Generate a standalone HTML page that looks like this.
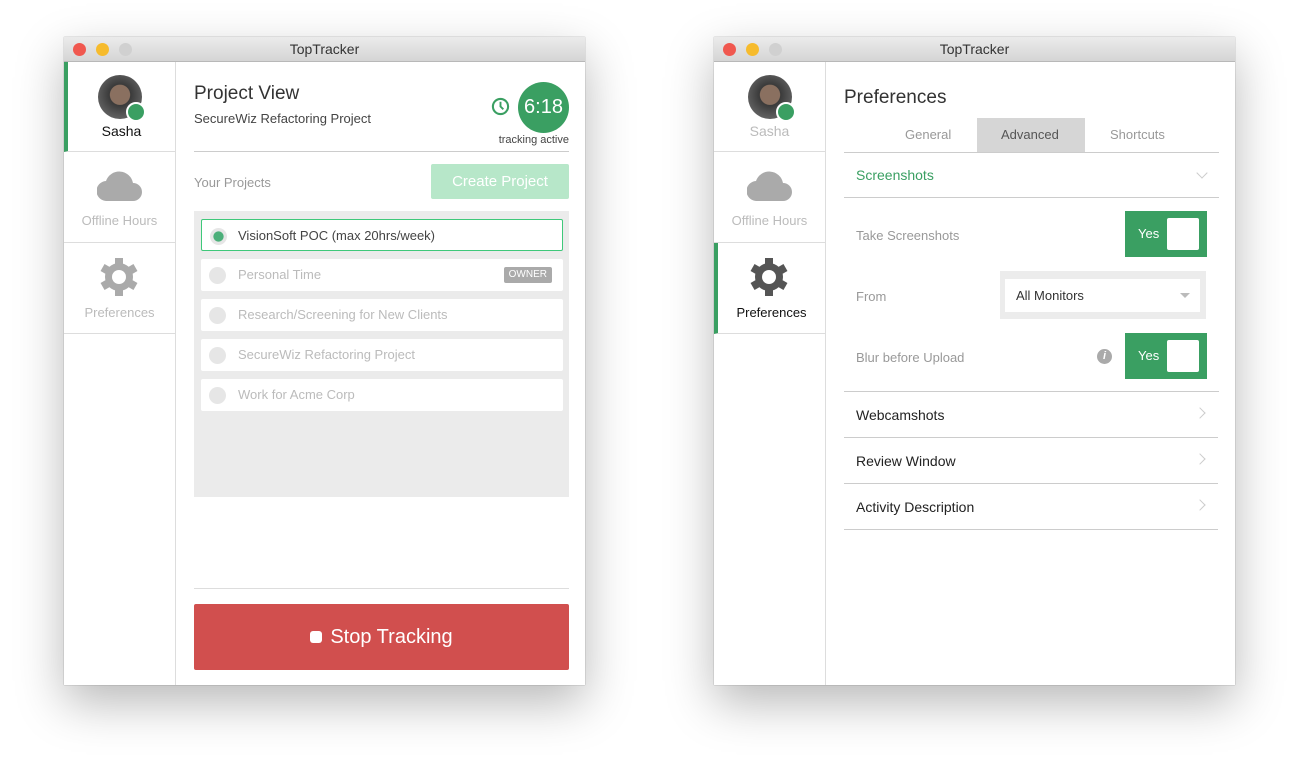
<!DOCTYPE html>
<html><head><meta charset="utf-8"><style>
*{box-sizing:border-box;margin:0;padding:0}
body{width:1300px;height:777px;background:#fff;position:relative;font-family:"Liberation Sans",sans-serif;overflow:hidden}
.a{position:absolute}
.win{position:absolute;top:37px;width:521px;height:648px;background:#fff;box-shadow:0 18px 45px rgba(0,0,0,.28),0 0 1px rgba(0,0,0,.4)}
.tb{position:absolute;left:0;top:0;width:100%;height:25px;background:linear-gradient(#ebebeb,#d5d5d5);border-bottom:1px solid #b8b8b8;text-align:center;font-size:14px;line-height:25px;color:#333}
.dot{position:absolute;top:6px;width:13px;height:13px;border-radius:50%}
.side{position:absolute;left:0;top:25px;width:112px;height:623px;border-right:1px solid #ddd}
.si{position:absolute;left:0;width:111px;border-bottom:1px solid #ddd;text-align:center;font-size:13px;color:#bbb}
.av{position:absolute;left:34px;top:13px;width:44px;height:44px;border-radius:50%;background:radial-gradient(circle at 50% 45%,#8a7060 0 30%,#3a3a3a 32%,#555 60%,#777)}
.badge{position:absolute;left:62px;top:40px;width:20px;height:20px;border-radius:50%;background:#3a9f62;border:2px solid #fff}
.proj{position:absolute;left:7px;width:362px;height:32px;background:#fff;border-radius:2px;font-size:13px;color:#bbb;line-height:32px;padding-left:37px}
.proj i{position:absolute;left:8px;top:8px;width:17px;height:17px;border-radius:50%;background:#e6e6e6}
.lbl{position:absolute;font-size:13px;color:#999}
.tog{position:absolute;width:82px;height:46px;background:#3a9f62;color:#fff;font-size:13px;line-height:46px;padding-left:13px}
.tog b{position:absolute;right:8px;top:7px;width:32px;height:32px;background:#fff;border-radius:2px}
.row{position:absolute;left:130px;width:374px;height:46px;border-bottom:1px solid #ccc;font-size:14px;color:#222;line-height:46px;padding-left:12px}
.chev{position:absolute;right:14px;top:17px;width:8px;height:8px;border-right:1.5px solid #ccc;border-top:1.5px solid #ccc;transform:rotate(45deg)}
</style></head><body>

<!-- Window 1 -->
<div class="win" style="left:64px">
 <div class="tb">TopTracker<div class="dot" style="left:9px;background:#f0584f"></div><div class="dot" style="left:32px;background:#f6bb2d"></div><div class="dot" style="left:55px;background:#d0d0d0"></div></div>
 <div class="side">
  <div class="si" style="top:0;height:90px;border-left:4px solid #3a9f62"><div class="av" style="left:30px"></div><div class="badge" style="left:58px"></div><div class="a" style="left:0;width:107px;top:61px;color:#111;font-size:14px">Sasha</div></div>
  <div class="si" style="top:90px;height:91px"><svg class="a" style="left:33px;top:19px" width="46" height="30" viewBox="0 0 46 30"><path d="M10 30a10 10 0 0 1-1-20 14 14 0 0 1 27 2 9 9 0 0 1 0 18z" fill="#aaa"/></svg><div class="a" style="left:0;width:111px;top:61px">Offline Hours</div></div>
  <div class="si" style="top:181px;height:91px"><svg class="a" style="left:35px;top:14px" width="40" height="40" viewBox="0 0 40 40"><g fill="#aaa"><circle cx="20" cy="20" r="14"/><g id="t"><rect x="16" y="1" width="8" height="8"/><rect x="16" y="31" width="8" height="8"/></g><use href="#t" transform="rotate(60 20 20)"/><use href="#t" transform="rotate(120 20 20)"/></g><circle cx="20" cy="20" r="7" fill="#fff"/></svg><div class="a" style="left:0;width:111px;top:62px">Preferences</div></div>
 </div>
 <div class="a" style="left:130px;top:46px;font-size:19px;color:#333">Project View</div>
 <div class="a" style="left:130px;top:74px;font-size:13px;color:#444">SecureWiz Refactoring Project</div>
 <svg class="a" style="left:427px;top:60px" width="19" height="19" viewBox="0 0 20 20"><circle cx="10" cy="10" r="8" fill="none" stroke="#3a9f62" stroke-width="2.2"/><path d="M10 5v5l3 3" fill="none" stroke="#3a9f62" stroke-width="2"/></svg>
 <div class="a" style="left:454px;top:45px;width:51px;height:51px;border-radius:50%;background:#3a9f62;color:#fff;font-size:20px;line-height:51px;text-align:center">6:18</div>
 <div class="a" style="left:420px;top:97px;width:85px;text-align:right;font-size:11px;color:#444">tracking active</div>
 <div class="a" style="left:130px;top:114px;width:375px;border-top:1px solid #ccc"></div>
 <div class="a" style="left:130px;top:138px;font-size:13px;color:#999">Your Projects</div>
 <div class="a" style="left:367px;top:127px;width:138px;height:35px;background:#b7e7c9;border-radius:2px;color:#fff;font-size:15px;text-align:center;line-height:35px">Create Project</div>
 <div class="a" style="left:130px;top:174px;width:375px;height:286px;background:#ebebeb">
  <div class="proj" style="top:8px;border:1.5px solid #3fc87a;color:#444;padding-left:36px"><i style="background:radial-gradient(#4caf7a 0 40%,#e6e6e6 45%)"></i>VisionSoft POC (max 20hrs/week)</div>
  <div class="proj" style="top:48px"><i></i>Personal Time<span class="a" style="right:11px;top:8px;height:16px;line-height:16px;background:#aaa;color:#fff;font-size:10px;padding:0 5px;border-radius:2px">OWNER</span></div>
  <div class="proj" style="top:88px"><i></i>Research/Screening for New Clients</div>
  <div class="proj" style="top:128px"><i></i>SecureWiz Refactoring Project</div>
  <div class="proj" style="top:168px"><i></i>Work for Acme Corp</div>
 </div>
 <div class="a" style="left:130px;top:551px;width:375px;border-top:1px solid #ddd"></div>
 <div class="a" style="left:130px;top:567px;width:375px;height:66px;background:#d14f4e;border-radius:2px;color:#fff;font-size:20px;text-align:center;line-height:66px"><span style="display:inline-block;width:12px;height:12px;background:#fff;border-radius:3px;margin-right:8px"></span>Stop Tracking</div>
</div>

<!-- Window 2 -->
<div class="win" style="left:714px">
 <div class="tb">TopTracker<div class="dot" style="left:9px;background:#f0584f"></div><div class="dot" style="left:32px;background:#f6bb2d"></div><div class="dot" style="left:55px;background:#d0d0d0"></div></div>
 <div class="side">
  <div class="si" style="top:0;height:90px"><div class="av"></div><div class="badge"></div><div class="a" style="left:0;width:111px;top:61px;font-size:14px">Sasha</div></div>
  <div class="si" style="top:90px;height:91px"><svg class="a" style="left:33px;top:19px" width="46" height="30" viewBox="0 0 46 30"><path d="M10 30a10 10 0 0 1-1-20 14 14 0 0 1 27 2 9 9 0 0 1 0 18z" fill="#aaa"/></svg><div class="a" style="left:0;width:111px;top:61px">Offline Hours</div></div>
  <div class="si" style="top:181px;height:91px;border-left:4px solid #3a9f62"><svg class="a" style="left:31px;top:14px" width="40" height="40" viewBox="0 0 40 40"><g fill="#555"><circle cx="20" cy="20" r="14"/><g id="t2"><rect x="16" y="1" width="8" height="8"/><rect x="16" y="31" width="8" height="8"/></g><use href="#t2" transform="rotate(60 20 20)"/><use href="#t2" transform="rotate(120 20 20)"/></g><circle cx="20" cy="20" r="7" fill="#fff"/></svg><div class="a" style="left:0;width:107px;top:62px;color:#111">Preferences</div></div>
 </div>
 <div class="a" style="left:130px;top:50px;font-size:19px;color:#333">Preferences</div>
 <div class="a" style="left:263px;top:81px;width:108px;height:34px;background:#d6d6d6"></div>
 <div class="a" style="left:191px;top:90px;font-size:13px;color:#999">General</div>
 <div class="a" style="left:287px;top:90px;font-size:13px;color:#555">Advanced</div>
 <div class="a" style="left:396px;top:90px;font-size:13px;color:#999">Shortcuts</div>
 <div class="a" style="left:130px;top:115px;width:375px;border-top:1px solid #ccc"></div>
 <div class="a" style="left:142px;top:130px;font-size:14px;color:#3a9f62">Screenshots</div>
 <div class="a" style="left:484px;top:132px;width:8px;height:8px;border-right:1.5px solid #ccc;border-bottom:1.5px solid #ccc;transform:rotate(45deg)"></div>
 <div class="a" style="left:130px;top:160px;width:375px;border-top:1px solid #ccc"></div>
 <div class="lbl" style="left:142px;top:191px">Take Screenshots</div>
 <div class="tog" style="left:411px;top:174px">Yes<b></b></div>
 <div class="lbl" style="left:142px;top:252px">From</div>
 <div class="a" style="left:286px;top:234px;width:206px;height:48px;background:#ececec"><div class="a" style="left:5px;top:8px;width:195px;height:33px;background:#fff;font-size:13px;color:#333;line-height:33px;padding-left:11px">All Monitors<span class="a" style="right:10px;top:14px;border:5px solid transparent;border-top:5px solid #bbb"></span></div></div>
 <div class="lbl" style="left:142px;top:313px">Blur before Upload</div>
 <div class="a" style="left:383px;top:312px;width:15px;height:15px;border-radius:50%;background:#aaa;color:#fff;font-size:11px;font-weight:bold;text-align:center;line-height:15px;font-style:italic">i</div>
 <div class="tog" style="left:411px;top:296px">Yes<b></b></div>
 <div class="a" style="left:130px;top:354px;width:375px;border-top:1px solid #ccc"></div>
 <div class="row" style="top:355px">Webcamshots<span class="chev"></span></div>
 <div class="row" style="top:401px">Review Window<span class="chev"></span></div>
 <div class="row" style="top:447px">Activity Description<span class="chev"></span></div>
</div>
</body></html>
